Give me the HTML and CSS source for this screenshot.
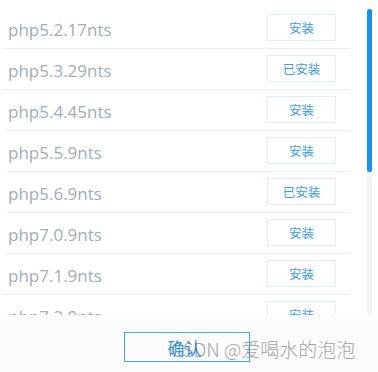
FILE: index.html
```html
<!DOCTYPE html>
<html>
<head>
<meta charset="utf-8">
<link rel="stylesheet" href="styles.css">
</head>
<body>
<div class="page">
  <div class="panel">
    <div class="list">
      <div class="row"><span class="name">php5.2.17nts</span><span class="btn">安装</span></div>
      <div class="row"><span class="name">php5.3.29nts</span><span class="btn">已安装</span></div>
      <div class="row"><span class="name">php5.4.45nts</span><span class="btn">安装</span></div>
      <div class="row"><span class="name">php5.5.9nts</span><span class="btn">安装</span></div>
      <div class="row"><span class="name">php5.6.9nts</span><span class="btn">已安装</span></div>
      <div class="row"><span class="name">php7.0.9nts</span><span class="btn">安装</span></div>
      <div class="row"><span class="name">php7.1.9nts</span><span class="btn">安装</span></div>
      <div class="row"><span class="name">php7.2.9nts</span><span class="btn">安装</span></div>
    </div>
    <div class="scroll"><div class="thumb"></div></div>
  </div>
  <div class="footer">
    <div class="confirm">确认</div>
  </div>
  <div class="watermark">CSDN @爱喝水的泡泡</div>
</div>
</body>
</html>
```
FILE: styles.css
```css
html, body {
  margin: 0;
  padding: 0;
  background: #fcfcfc;
}
.page {
  position: relative;
  width: 378px;
  height: 372px;
  overflow: hidden;
  font-family: "Open Sans", "Noto Sans CJK SC", sans-serif;
}
.panel {
  display: flex;
  height: 315px;
  overflow: hidden;
  background: #ffffff;
}
.list {
  width: 347px;
  margin-left: 3px;
  padding-top: 8px;
}
.row {
  display: flex;
  align-items: center;
  justify-content: space-between;
  height: 40px;
  border-bottom: 1.5px solid #eeeeee;
  padding-left: 5px;
  padding-right: 14px;
}
.name {
  font-size: 17px;
  color: #a5abb6;
  margin-top: 2px;
}
.btn {
  width: 67px;
  height: 25px;
  border: 1px solid #e1eefa;
  background: #fff;
  display: flex;
  align-items: center;
  justify-content: center;
  font-family: "Noto Sans CJK SC", sans-serif;
  font-size: 12.5px;
  color: #3b9ce6;
  margin-top: -1px;
}
.scroll {
  margin-left: 17px;
  margin-top: 9px;
  width: 5px;
  background: #f3f3f3;
  border-radius: 3px;
}
.thumb {
  height: 163px;
  background: #1a8fe6;
  border-radius: 3px;
}
.footer {
  display: flex;
  padding-top: 17px;
  padding-left: 124px;
}
.confirm {
  width: 119px;
  height: 28px;
  border: 1.5px solid #3ca2ea;
  display: flex;
  align-items: center;
  justify-content: center;
  font-family: "Noto Sans CJK SC", sans-serif;
  font-size: 17px;
  color: #2f95e3;
  padding-right: 5px;
  box-sizing: content-box;
}
.watermark {
  position: absolute;
  left: 171px;
  top: 336px;
  font-family: "Noto Sans CJK SC", sans-serif;
  font-weight: 300;
  font-size: 19px;
  line-height: 26px;
  color: rgba(100, 100, 100, 0.62);
  white-space: nowrap;
}
```
